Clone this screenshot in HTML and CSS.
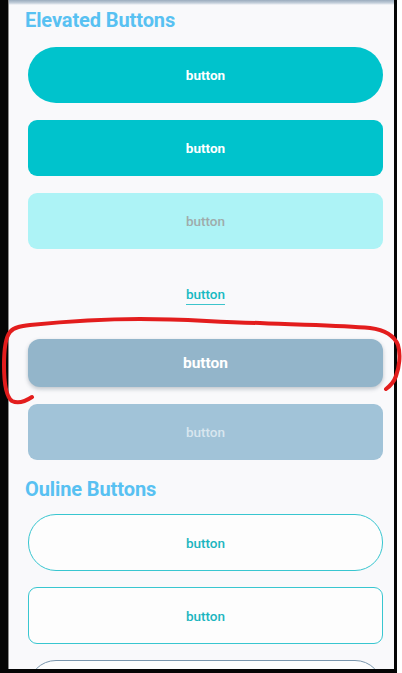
FILE: index.html
```html
<!DOCTYPE html>
<html lang="en">
<head>
<meta charset="utf-8">
<title>Buttons</title>
<link rel="stylesheet" href="styles.css">
</head>
<body>
<div class="page">
  <div class="device">
    <div class="screen">
      <div class="appbar-shadow"></div>
      <h2 class="section-title">Elevated Buttons</h2>
      <div class="btn-list elevated-list">
        <button class="btn btn-primary btn-stadium">button</button>
        <button class="btn btn-primary btn-rounded">button</button>
        <button class="btn btn-disabled btn-rounded">button</button>
        <div class="btn btn-text"><span class="link">button</span></div>
        <button class="btn btn-steel">button</button>
        <button class="btn btn-steel-disabled btn-rounded">button</button>
      </div>
      <h2 class="section-title second">Ouline Buttons</h2>
      <div class="btn-list outline-list">
        <button class="btn btn-outline btn-stadium">button</button>
        <button class="btn btn-outline btn-rounded">button</button>
        <button class="btn btn-outline-dark btn-stadium" aria-label="button"></button>
      </div>
    </div>
  </div>
  <svg class="annotation" width="402" height="673" viewBox="0 0 402 673">
    <path d="M32,397 C26,401 18,404 12,401 C5,396 4,380 4,365 C4,350 5,338 10,332 C14,327 22,326 30,325 C60,322 100,319 140,319 C190,319 210,322 260,323 C300,325 340,325 370,328 C385,330 394,335 398,345 C401,355 399,368 396,376 C394,382 390,386 386,389" />
  </svg>
</div>
</body>
</html>
```
FILE: styles.css
```css
* {
  box-sizing: border-box;
}

html, body {
  margin: 0;
  padding: 0;
  background: #ffffff;
}

body {
  font-family: Roboto, "Liberation Sans", Arial, sans-serif;
}

.page {
  position: relative;
  width: 402px;
  height: 673px;
  overflow: hidden;
}

.device {
  width: 397px;
  height: 673px;
  background: #050505;
  padding: 0 3px 4px 8px;
}

.screen {
  width: 100%;
  height: 100%;
  background: #f9f9fb;
  border-left: 1px solid #8c8c8c;
  overflow: hidden;
  display: flex;
  flex-direction: column;
}

.appbar-shadow {
  flex: none;
  height: 5px;
  background: linear-gradient(#9aabbd, #c5d0db 60%, #f9f9fb);
}

.section-title {
  margin: 3px 0 15px 16px;
  font-size: 20px;
  line-height: 24px;
  font-weight: 700;
  color: #58c1f2;
  letter-spacing: -0.1px;
}

.section-title.second {
  margin-top: 17px;
  margin-bottom: 13px;
}

.btn-list {
  display: flex;
  flex-direction: column;
  margin-left: 19px;
  width: 355px;
}

.elevated-list {
  gap: 17px;
}

.outline-list {
  gap: 16px;
}

.btn {
  flex: none;
  height: 56px;
  width: 100%;
  border: none;
  padding: 0;
  margin: 0;
  font-family: Roboto, "Liberation Sans", Arial, sans-serif;
  font-size: 13.5px;
  font-weight: 700;
  display: flex;
  align-items: center;
  justify-content: center;
}

.btn-stadium {
  border-radius: 28px;
}

.btn-rounded {
  border-radius: 9px;
}

.btn-primary {
  background: #00c3cc;
  color: #ffffff;
}

.btn-disabled {
  background: #adf3f6;
  color: #9fabab;
  font-weight: 500;
}

.btn-text {
  background: transparent;
}

.link {
  color: #17b9c2;
  font-weight: 500;
  font-size: 13.5px;
  padding-bottom: 1px;
  border-bottom: 1.5px solid #3cc4cc;
  line-height: 17px;
  margin-top: 2px;
}

.btn-steel {
  height: 48px;
  border-radius: 12px;
  background: #93b5ca;
  color: #ffffff;
  font-size: 15.5px;
  box-shadow: 0 2px 4px rgba(40, 60, 80, 0.28);
}

.btn-steel-disabled {
  background: #a1c3d8;
  color: #d8e6ef;
  font-weight: 500;
}

.outline-list .btn {
  height: 57px;
}

.btn-outline {
  background: #fdfdfd;
  border: 1px solid #38c6d0;
  color: #1bb5bf;
  font-weight: 500;
}

.btn-outline-dark {
  background: #fdfdfd;
  border: 1.5px solid #7a96ad;
  color: #5a7890;
  font-weight: 500;
}

.annotation {
  position: absolute;
  top: 0;
  left: 0;
  pointer-events: none;
}

.annotation path {
  fill: none;
  stroke: #e31d1d;
  stroke-width: 4;
  stroke-linecap: round;
  stroke-linejoin: round;
}
```
